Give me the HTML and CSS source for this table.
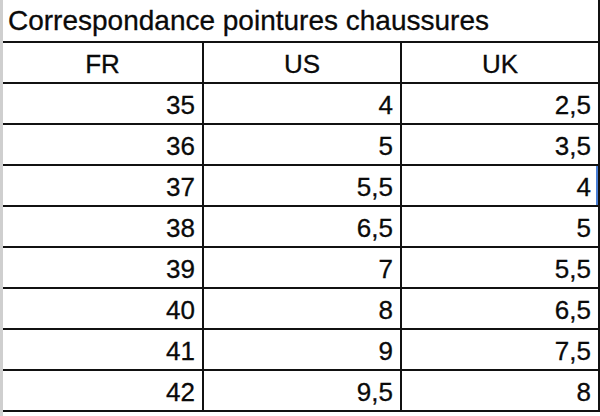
FILE: index.html
```html
<!DOCTYPE html>
<html lang="fr">
<head>
<meta charset="utf-8">
<title>Correspondance pointures chaussures</title>
<link rel="stylesheet" href="styles.css">
</head>
<body>
<div class="sheet">
  <div class="grid">
    <div class="cell title">Correspondance pointures chaussures</div>
    <div class="cell head">FR</div>
    <div class="cell head">US</div>
    <div class="cell head">UK</div>

    <div class="cell num">35</div><div class="cell num">4</div><div class="cell num">2,5</div>
    <div class="cell num">36</div><div class="cell num">5</div><div class="cell num">3,5</div>
    <div class="cell num">37</div><div class="cell num">5,5</div><div class="cell num selected">4</div>
    <div class="cell num">38</div><div class="cell num">6,5</div><div class="cell num">5</div>
    <div class="cell num">39</div><div class="cell num">7</div><div class="cell num">5,5</div>
    <div class="cell num">40</div><div class="cell num">8</div><div class="cell num">6,5</div>
    <div class="cell num">41</div><div class="cell num">9</div><div class="cell num">7,5</div>
    <div class="cell num">42</div><div class="cell num">9,5</div><div class="cell num">8</div>
  </div>
</div>
</body>
</html>
```

FILE: styles.css
```css
html, body {
  margin: 0;
  padding: 0;
  background: #ffffff;
}

body {
  width: 600px;
  height: 416px;
  overflow: hidden;
  font-family: "Liberation Sans", Arial, sans-serif;
  color: #0a0a0a;
}

.sheet {
  border-left: 3px solid #cfcfcf;
  height: 416px;
  box-sizing: border-box;
}

.grid {
  display: grid;
  grid-template-columns: 201px 198px 198px;
  grid-template-rows: 43px repeat(9, 41px);
}

.cell {
  border-right: 2px solid #111111;
  border-bottom: 2px solid #111111;
  display: flex;
  align-items: center;
  font-size: 26px;
  line-height: 1;
  -webkit-text-stroke: 0.3px #0a0a0a;
}

.title {
  grid-column: 1 / 4;
  padding-left: 5px;
  font-size: 28px;
  padding-top: 1px;
}

.head {
  justify-content: center;
  padding-top: 2px;
}

.num {
  justify-content: flex-end;
  padding-right: 7px;
  padding-top: 2px;
}

.selected {
  box-shadow: inset -2px 0 0 #4a7fd6;
}
```
